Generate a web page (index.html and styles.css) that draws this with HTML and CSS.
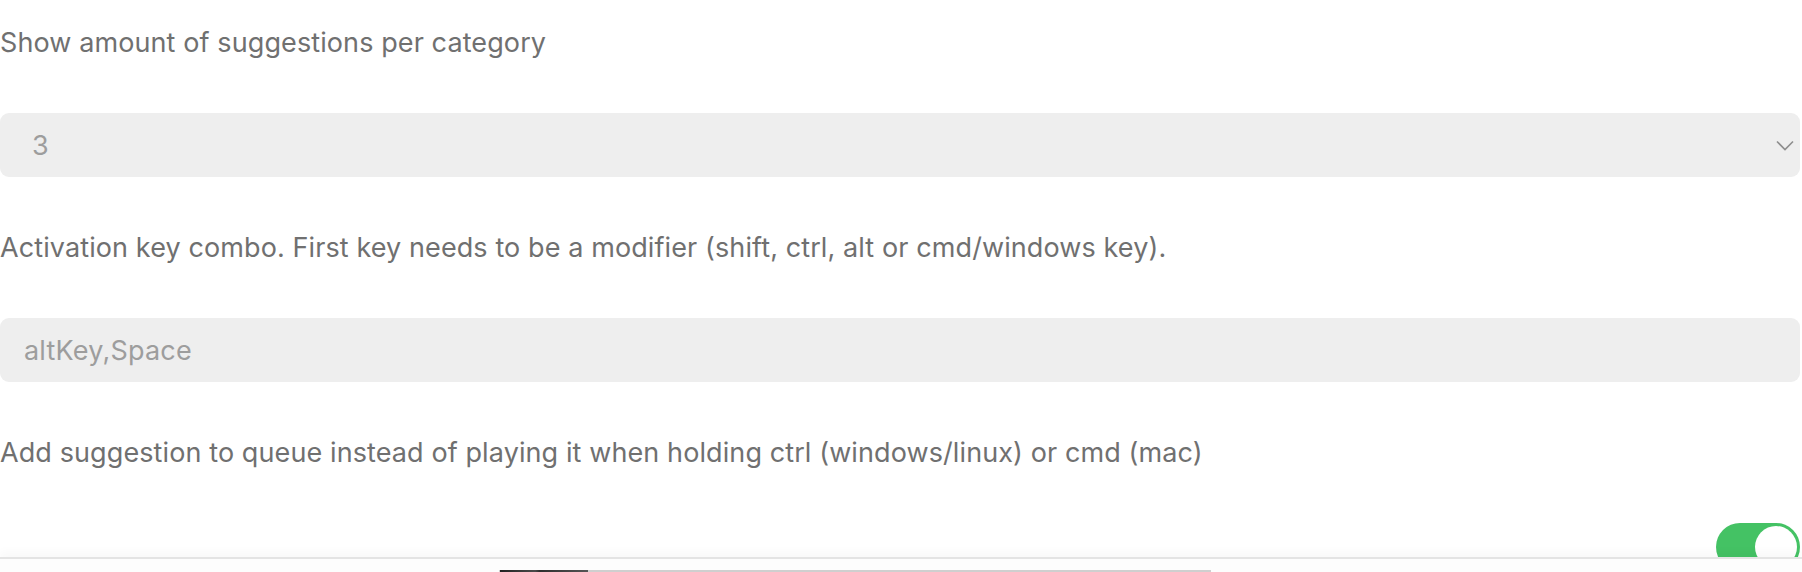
FILE: index.html
```html
<!DOCTYPE html>
<html lang="en">
<head>
<meta charset="utf-8">
<title>Settings</title>
<link rel="stylesheet" href="styles.css">
</head>
<body>
<main class="settings">
  <section class="field">
    <label class="field-label" for="amount">Show amount of suggestions per category</label>
    <div class="select-wrap">
      <select id="amount" class="control select">
        <option>3</option>
      </select>
      <svg class="chevron" viewBox="0 0 18 11" width="18" height="11" aria-hidden="true"><path d="M1 1.5 L9 9.5 L17 1.5" fill="none" stroke="#8e8e8e" stroke-width="1.6"/></svg>
    </div>
  </section>
  <section class="field">
    <label class="field-label" for="combo">Activation key combo. First key needs to be a modifier (shift, ctrl, alt or cmd/windows key).</label>
    <input id="combo" class="control input" placeholder="altKey,Space">
  </section>
  <section class="field">
    <span class="field-label">Add suggestion to queue instead of playing it when holding ctrl (windows/linux) or cmd (mac)</span>
    <div class="toggle-row">
      <span class="toggle" role="switch" aria-checked="true"><span class="knob"></span></span>
    </div>
  </section>
</main>
<footer class="player">
  <div class="player-art"><span class="art-dark"></span></div>
</footer>
</body>
</html>
```
FILE: styles.css
```css
html, body {
  margin: 0;
  padding: 0;
  background: #ffffff;
  overflow: hidden;
}
body {
  font-family: "Inter", "Noto Sans", sans-serif;
  font-size: 27px;
  letter-spacing: 0.1px;
  color: #707070;
}
.settings {
  width: 1800px;
  padding-top: 28px;
  display: flex;
  flex-direction: column;
  gap: 56px;
}
.field {
  display: flex;
  flex-direction: column;
  gap: 56px;
}
.field-label {
  display: block;
  line-height: 29px;
  height: 29px;
  color: #707070;
  white-space: nowrap;
}
.control {
  box-sizing: border-box;
  width: 100%;
  height: 64px;
  border: none;
  border-radius: 9px;
  background: #eeeeee;
  font-family: "Inter", "Noto Sans", sans-serif;
  font-size: 27px;
  letter-spacing: 0.2px;
  color: #9d9d9d;
  outline: none;
  margin: 0;
}
.select-wrap {
  position: relative;
}
.select {
  appearance: none;
  -webkit-appearance: none;
  padding: 0 24px 0 32px;
}
.chevron {
  position: absolute;
  right: 6px;
  top: 27px;
}
.input {
  padding: 0 24px;
}
.input::placeholder {
  color: #9d9d9d;
}
.toggle-row {
  display: flex;
  justify-content: flex-end;
}
.toggle {
  box-sizing: border-box;
  width: 84px;
  height: 48px;
  border-radius: 24px;
  background: #44c264;
  display: flex;
  align-items: center;
  justify-content: flex-end;
  padding-right: 3px;
}
.knob {
  width: 42px;
  height: 42px;
  border-radius: 50%;
  background: #ffffff;
}
.player {
  position: fixed;
  left: 0;
  right: 0;
  top: 557px;
  height: 20px;
  background: #fdfdfd;
  border-top: 2px solid #e4e4e4;
  box-shadow: 0 -6px 8px rgba(0, 0, 0, 0.025);
}
.player-art {
  position: absolute;
  left: 499px;
  top: 11px;
  width: 712px;
  height: 30px;
  box-sizing: border-box;
  border-top: 2px solid #cfcfcf;
  border-left: 1px solid #cfcfcf;
  border-right: 1px solid #cfcfcf;
}
.art-dark {
  display: block;
  width: 88px;
  height: 30px;
  margin-top: -2px;
  background: linear-gradient(90deg, #222222, #4a4a4a 40%, #2e2e2e 45%, #555555);
}
```
